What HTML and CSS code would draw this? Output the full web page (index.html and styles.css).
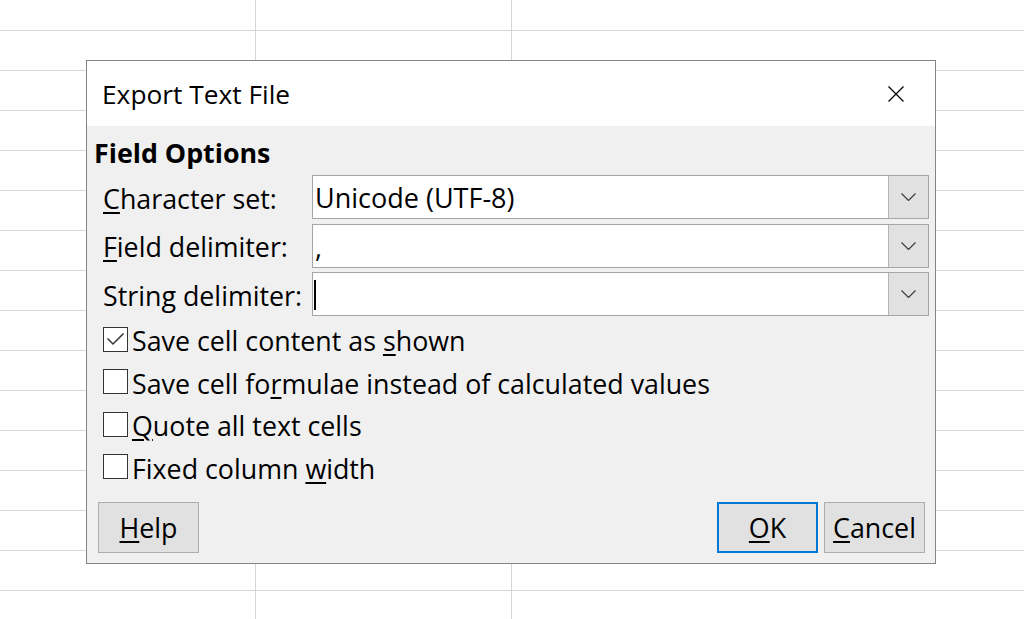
FILE: index.html
```html
<!DOCTYPE html>
<html lang="en">
<head>
<meta charset="utf-8">
<title>Export Text File</title>
<link rel="stylesheet" href="styles.css">
</head>
<body>
<div class="dialog">
  <div class="titlebar">
    <span class="title">Export Text File</span>
    <span class="close">
      <svg width="16" height="16" viewBox="0 0 16 16"><path d="M0.5 0.5 L15.5 15.5 M15.5 0.5 L0.5 15.5" stroke="#000" stroke-width="1.3" fill="none"/></svg>
    </span>
  </div>
  <div class="content">
    <div class="heading">Field Options</div>
    <div class="fields">
      <div class="field-row">
        <span class="label"><u>C</u>haracter set:</span>
        <div class="combo">
          <span class="combo-text">Unicode (UTF-8)</span>
          <span class="combo-btn"><svg width="15" height="8" viewBox="0 0 15 8"><path d="M0.5 0.5 L7.5 7.5 L14.5 0.5" stroke="#3c3c3c" stroke-width="1.2" fill="none"/></svg></span>
        </div>
      </div>
      <div class="field-row">
        <span class="label"><u>F</u>ield delimiter:</span>
        <div class="combo">
          <span class="combo-text">,</span>
          <span class="combo-btn"><svg width="15" height="8" viewBox="0 0 15 8"><path d="M0.5 0.5 L7.5 7.5 L14.5 0.5" stroke="#3c3c3c" stroke-width="1.2" fill="none"/></svg></span>
        </div>
      </div>
      <div class="field-row">
        <span class="label">Strin<u>g</u> delimiter:</span>
        <div class="combo">
          <span class="combo-text"><span class="caret"></span></span>
          <span class="combo-btn"><svg width="15" height="8" viewBox="0 0 15 8"><path d="M0.5 0.5 L7.5 7.5 L14.5 0.5" stroke="#3c3c3c" stroke-width="1.2" fill="none"/></svg></span>
        </div>
      </div>
    </div>
    <div class="checks">
      <div class="check-row">
        <span class="box"><svg width="23" height="23" viewBox="0 0 23 23"><path d="M3.5 10.5 L9 16 L19.5 5.5" stroke="#333" stroke-width="1.5" fill="none"/></svg></span>
        <span class="check-label">Save cell content as <u>s</u>hown</span>
      </div>
      <div class="check-row">
        <span class="box"></span>
        <span class="check-label">Save cell fo<u>r</u>mulae instead of calculated values</span>
      </div>
      <div class="check-row">
        <span class="box"></span>
        <span class="check-label"><u>Q</u>uote all text cells</span>
      </div>
      <div class="check-row">
        <span class="box"></span>
        <span class="check-label">Fixed column <u>w</u>idth</span>
      </div>
    </div>
    <div class="buttons">
      <button class="btn"><u>H</u>elp</button>
      <span class="spacer"></span>
      <button class="btn default"><u>O</u>K</button>
      <button class="btn"><u>C</u>ancel</button>
    </div>
  </div>
</div>
</body>
</html>
```

FILE: styles.css
```css
html, body {
  margin: 0;
  padding: 0;
}

body {
  width: 1024px;
  height: 619px;
  overflow: hidden;
  position: relative;
  font-family: "Open Sans", "Noto Sans", sans-serif;
  color: #000;
  background-color: #fff;
  background-image:
    linear-gradient(90deg, transparent 0, transparent 255px, #d6d6d6 255px, #d6d6d6 256px, transparent 256px, transparent 511px, #d6d6d6 511px, #d6d6d6 512px, transparent 512px),
    repeating-linear-gradient(180deg, transparent 0, transparent 31px, #d6d6d6 31px, #d6d6d6 32px, transparent 32px, transparent 40px);
  background-position: 0 -1px, 0 -1px;
  background-size: 1024px 640px;
}

u {
  text-decoration-thickness: 1.5px;
  text-underline-offset: 3px;
}

.dialog {
  position: absolute;
  left: 86px;
  top: 60px;
  width: 850px;
  height: 504px;
  box-sizing: border-box;
  border: 1px solid #858585;
  background: #f0f0f0;
  display: flex;
  flex-direction: column;
}

.titlebar {
  height: 65px;
  flex: none;
  background: #fff;
  display: flex;
  align-items: center;
  padding-left: 15px;
}

.title {
  flex: 1;
  font-size: 26.3px;
  line-height: 34px;
}

.close {
  width: 46px;
  height: 65px;
  margin-right: 16px;
  display: flex;
  align-items: center;
  justify-content: center;
}

.close svg {
  display: block;
}

.content {
  flex: 1;
  display: flex;
  flex-direction: column;
  padding: 9.5px 6px 10px 7px;
}

.heading {
  font-weight: 700;
  font-size: 26.8px;
  line-height: 34px;
}

.fields {
  margin-top: 5.5px;
  display: flex;
  flex-direction: column;
  gap: 4.5px;
}

.field-row {
  display: flex;
  align-items: center;
  height: 44px;
  padding-left: 9px;
}

.label {
  width: 209px;
  flex: none;
  font-size: 26.8px;
  line-height: 34px;
  padding-top: 3px;
  white-space: nowrap;
}

.combo {
  flex: 1;
  height: 44px;
  box-sizing: border-box;
  border: 1px solid #a5a5a5;
  background: #fff;
  display: flex;
}

.combo-text {
  flex: 1;
  display: flex;
  align-items: center;
  padding-left: 2px;
  padding-top: 2px;
  font-size: 27px;
  line-height: 34px;
}

.caret {
  display: block;
  width: 2px;
  height: 30px;
  margin-left: -1px;
  background: #000;
}

.combo-btn {
  width: 39px;
  flex: none;
  background: #e1e1e1;
  border-left: 1px solid #b4b4b4;
  display: flex;
  align-items: center;
  justify-content: center;
}

.combo-btn svg {
  display: block;
}

.checks {
  margin-top: 2.75px;
  padding-left: 9px;
  display: flex;
  flex-direction: column;
}

.check-row {
  display: flex;
  align-items: center;
  height: 42.5px;
  font-size: 26.8px;
  line-height: 34px;
  white-space: nowrap;
}

.check-label {
  padding-top: 2px;
}

.box {
  width: 25px;
  height: 25px;
  flex: none;
  box-sizing: border-box;
  border: 1px solid #333;
  background: #fff;
  margin-right: 4px;
  margin-top: -2px;
}

.box svg {
  display: block;
}

.buttons {
  margin-top: auto;
  display: flex;
  gap: 6px;
  padding: 0 4px;
}

.spacer {
  flex: 1;
}

.btn {
  width: 101px;
  height: 51px;
  box-sizing: border-box;
  border: 1px solid #adadad;
  background: #e1e1e1;
  font-family: inherit;
  font-size: 26.8px;
  line-height: 34px;
  color: #000;
  padding: 0;
  margin: 0;
}

.btn.default {
  border: 2px solid #0078d7;
}
```
